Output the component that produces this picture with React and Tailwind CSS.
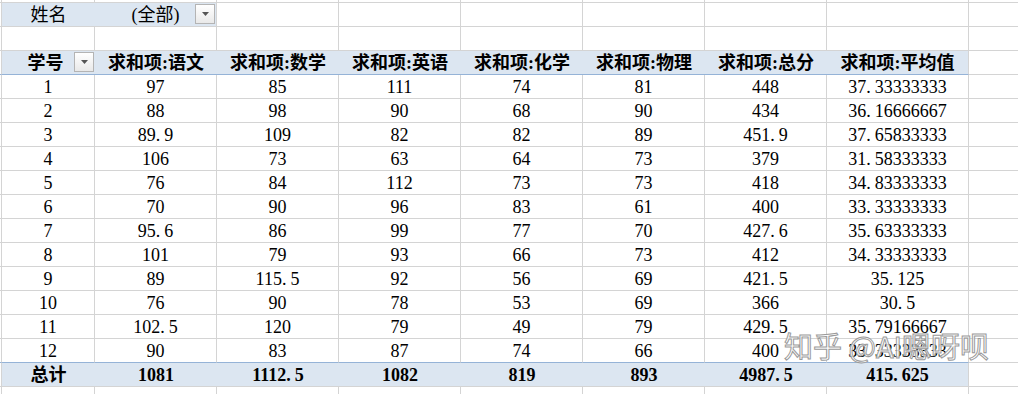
import React from 'react';

const W = ['w-[93px]', 'w-[122px]', 'w-[122px]', 'w-[122px]', 'w-[122px]', 'w-[122px]', 'w-[122px]', 'w-[142px]'];

const headers = ['学号', '求和项:语文', '求和项:数学', '求和项:英语', '求和项:化学', '求和项:物理', '求和项:总分', '求和项:平均值'];

const rows = [
  ['1', '97', '85', '111', '74', '81', '448', '37.33333333'],
  ['2', '88', '98', '90', '68', '90', '434', '36.16666667'],
  ['3', '89.9', '109', '82', '82', '89', '451.9', '37.65833333'],
  ['4', '106', '73', '63', '64', '73', '379', '31.58333333'],
  ['5', '76', '84', '112', '73', '73', '418', '34.83333333'],
  ['6', '70', '90', '96', '83', '61', '400', '33.33333333'],
  ['7', '95.6', '86', '99', '77', '70', '427.6', '35.63333333'],
  ['8', '101', '79', '93', '66', '73', '412', '34.33333333'],
  ['9', '89', '115.5', '92', '56', '69', '421.5', '35.125'],
  ['10', '76', '90', '78', '53', '69', '366', '30.5'],
  ['11', '102.5', '120', '79', '49', '79', '429.5', '35.79166667'],
  ['12', '90', '83', '87', '74', '66', '400', '33.33333333'],
];

const totals = ['总计', '1081', '1112.5', '1082', '819', '893', '4987.5', '415.625'];

// SimSun style numbers: the decimal point takes a full half-width cell
const Num = ({ v }) => {
  const parts = v.split('.');
  if (parts.length < 2) return <>{v}</>;
  return (
    <>
      {parts[0]}
      <span className="pr-[4px]">.</span>
      {parts[1]}
    </>
  );
};

// little filter button like Excel's
const DropBtn = ({ className }) => (
  <div className={`absolute w-[20px] h-[20px] border border-[#b4b4b4] bg-linear-to-b from-white to-[#e9e9e9] flex items-center justify-center ${className}`}>
    <svg width="7" height="4" viewBox="0 0 7 4">
      <polygon points="0,0 7,0 3.5,4" fill="#555" />
    </svg>
  </div>
);

const Edge = ({ blueBottom }) => (
  <div className={`w-[2px] h-full border-r border-b border-[#d4d4d4] ${blueBottom ? 'border-b-[#95b3d7]' : ''}`} />
);

const Rest = () => <div className="flex-1 h-full border-b border-[#d4d4d4]" />;

const App = () => {
  return (
    <div className="w-[1018px] h-[394px] overflow-hidden bg-white relative text-black text-[18px] [font-family:'Liberation_Serif','Noto_Sans_CJK_SC',serif]">
      {/* top strip */}
      <div className="flex h-[3px]">
        <div className="w-[2px] h-full border-r border-b border-[#d4d4d4]" />
        {W.map((w, i) => (
          <div key={i} className={`${w} h-full border-r border-b border-[#d4d4d4]`} />
        ))}
        <Rest />
      </div>

      {/* filter row */}
      <div className="flex h-[24px]">
        <Edge />
        <div className="w-[93px] h-full bg-[#dce6f1] border-b border-[#d4d4d4] flex items-center justify-center pt-[1px]">姓名</div>
        <div className="w-[122px] h-full bg-[#dce6f1] border-r border-b border-[#d4d4d4] flex items-center justify-center relative pt-[1px]">
          <span>(全部)</span>
          <DropBtn className="right-[1px] top-[1px]" />
        </div>
        {W.slice(2).map((w, i) => (
          <div key={i} className={`${w} h-full border-r border-b border-[#d4d4d4]`} />
        ))}
        <Rest />
      </div>

      {/* empty row */}
      <div className="flex h-[24px]">
        <Edge />
        {W.map((w, i) => (
          <div key={i} className={`${w} h-full border-r border-b border-[#d4d4d4]`} />
        ))}
        <Rest />
      </div>

      {/* header row */}
      <div className="flex h-[24px] font-bold">
        <Edge blueBottom />
        {headers.map((h, i) => (
          <div
            key={i}
            className={`${W[i]} h-full bg-[#dce6f1] border-b border-[#95b3d7] flex items-center justify-center relative pt-[1px] ${i === 7 ? 'border-r border-r-[#d4d4d4]' : ''}`}
          >
            <span className={i === 0 ? 'mr-[6px]' : ''}>{h}</span>
            {i === 0 && <DropBtn className="right-[1px] top-[1px]" />}
          </div>
        ))}
        <Rest />
      </div>

      {/* data rows */}
      {rows.map((r, ri) => (
        <div key={ri} className="flex h-[24px]">
          <Edge blueBottom={ri === rows.length - 1} />
          {r.map((v, i) => (
            <div
              key={i}
              className={`${W[i]} h-full border-r border-b border-[#d4d4d4] flex items-center justify-center pt-[2px] ${ri === rows.length - 1 ? 'border-b-[#95b3d7]' : ''}`}
            >
              <span><Num v={v} /></span>
            </div>
          ))}
          <Rest />
        </div>
      ))}

      {/* total row */}
      <div className="flex h-[24px] font-bold">
        <Edge />
        {totals.map((v, i) => (
          <div
            key={i}
            className={`${W[i]} h-full bg-[#dce6f1] border-b border-[#d4d4d4] flex items-center justify-center pt-[2px] ${i === 7 ? 'border-r' : ''}`}
          >
            <span><Num v={v} /></span>
          </div>
        ))}
        <Rest />
      </div>

      {/* trailing row */}
      <div className="flex h-[24px]">
        <Edge />
        {W.map((w, i) => (
          <div key={i} className={`${w} h-full border-r border-b border-[#d4d4d4]`} />
        ))}
        <Rest />
      </div>

      {/* watermark */}
      <div className="absolute left-[784px] top-[331px] text-[29px] leading-none whitespace-nowrap text-white/85 [font-family:'Noto_Sans_CJK_SC',sans-serif] [-webkit-text-stroke:1px_#9a9a9a]">
        知乎 @AI嗯呀呗
      </div>
    </div>
  );
};

export default App;
